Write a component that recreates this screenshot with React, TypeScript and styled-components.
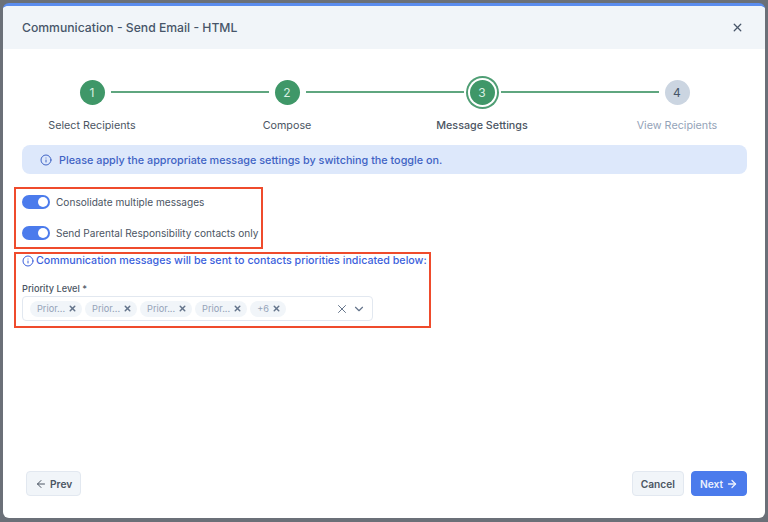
import React from "react";
import styled, { createGlobalStyle } from "styled-components";
import { ArrowLeft, ArrowRight, ChevronDown, Info, X } from "lucide-react";

const GlobalStyle = createGlobalStyle`
  html, body {
    margin: 0;
    padding: 0;
    height: 522px;
    overflow: hidden;
    background: #6b7078;
    font-family: Inter, "Liberation Sans", sans-serif;
  }
  * { box-sizing: border-box; }
`;

const steps = [
  { n: 1, label: "Select Recipients", state: "done" },
  { n: 2, label: "Compose", state: "done" },
  { n: 3, label: "Message Settings", state: "active" },
  { n: 4, label: "View Recipients", state: "todo" },
];

const chips = ["Prior...", "Prior...", "Prior...", "Prior...", "+6"];

const App = () => {
  return (
    <>
      <GlobalStyle />
      <Backdrop>
        <Modal>
          <Header>
            <Title>Communication - Send Email - HTML</Title>
            <CloseButton>
              <X size={13} strokeWidth={2.4} />
            </CloseButton>
          </Header>

          <Body>
            <Track>
              {steps.map((s, i) => (
                <React.Fragment key={s.n}>
                  {i > 0 && <Connector />}
                  <Circle $state={s.state}>{s.n}</Circle>
                </React.Fragment>
              ))}
            </Track>
            <Labels>
              {steps.map((s) => (
                <StepLabel key={s.n} $state={s.state}>
                  {s.label}
                </StepLabel>
              ))}
            </Labels>

            <Alert>
              <Info size={12} strokeWidth={2} />
              <span>Please apply the appropriate message settings by switching the toggle on.</span>
            </Alert>

            <ToggleBox>
              <ToggleRow>
                <Toggle />
                <span>Consolidate multiple messages</span>
              </ToggleRow>
              <ToggleRow>
                <Toggle />
                <span>Send Parental Responsibility contacts only</span>
              </ToggleRow>
            </ToggleBox>

            <PriorityBox>
              <Notice>
                <Info size={12} strokeWidth={2} />
                <span>Communication messages will be sent to contacts priorities indicated below:</span>
              </Notice>
              <FieldLabel>Priority Level *</FieldLabel>
              <Select>
                <Chips>
                  {chips.map((c, i) => (
                    <Chip key={i}>
                      <span>{c}</span>
                      <X size={9} strokeWidth={4} />
                    </Chip>
                  ))}
                </Chips>
                <SelectIcons>
                  <X size={14} strokeWidth={1.7} />
                  <ChevronDown size={14} strokeWidth={2} />
                </SelectIcons>
              </Select>
            </PriorityBox>
          </Body>

          <Footer>
            <Button>
              <ArrowLeft size={12} strokeWidth={2} />
              Prev
            </Button>
            <FooterRight>
              <Button>Cancel</Button>
              <Button $primary>
                Next
                <ArrowRight size={12} strokeWidth={2.6} />
              </Button>
            </FooterRight>
          </Footer>
        </Modal>
      </Backdrop>
    </>
  );
};

const Backdrop = styled.div`
  height: 522px;
  padding: 3px 3px 4px;
`;

const Modal = styled.div`
  display: flex;
  flex-direction: column;
  height: 100%;
  background: #ffffff;
  border-top: 3px solid #5b8def;
  border-radius: 6px;
  overflow: hidden;
`;

const Header = styled.div`
  display: flex;
  align-items: center;
  justify-content: space-between;
  height: 43px;
  flex: none;
  padding: 0 21px 0 19px;
  background: #f1f5f9;
`;

const Title = styled.div`
  font-size: 12.2px;
  font-weight: 500;
  color: #475569;
`;

const CloseButton = styled.div`
  display: flex;
  color: #475569;
`;

const Body = styled.div`
  flex: 1;
  padding: 26px 18px 0 19px;
`;

const Track = styled.div`
  display: flex;
  align-items: center;
  height: 34px;
  padding: 0 57.5px;
`;

const Connector = styled.div`
  flex: 1;
  height: 2px;
  margin: 0 6px;
  background: #5fa67f;
`;

const Circle = styled.div<{ $state: string }>`
  display: flex;
  align-items: center;
  justify-content: center;
  flex: none;
  width: 25px;
  height: 25px;
  border-radius: 50%;
  font-size: 12px;
  background: ${(p) => (p.$state === "todo" ? "#cbd5e1" : "#3f9768")};
  color: ${(p) => (p.$state === "todo" ? "#475569" : "#d9efe3")};
  box-shadow: ${(p) =>
    p.$state === "active" ? "0 0 0 2px #fff, 0 0 0 4px #4f9e74" : "none"};
`;

const Labels = styled.div`
  display: flex;
  justify-content: space-between;
  margin-top: 9px;
`;

const StepLabel = styled.div<{ $state: string }>`
  width: 140px;
  text-align: center;
  font-size: 10.75px;
  line-height: 16px;
  font-weight: ${(p) => (p.$state === "active" ? 500 : 400)};
  color: ${(p) => (p.$state === "todo" ? "#94a3b8" : "#4b5563")};
`;

const Alert = styled.div`
  display: flex;
  align-items: center;
  gap: 7px;
  height: 29px;
  margin-top: 11px;
  padding: 1px 18px 0;
  border-radius: 8px;
  background: #dde8fb;
  color: #3f63c4;
  font-size: 10.8px;
  font-weight: 500;

  svg {
    flex: none;
  }
`;

const ToggleBox = styled.div`
  display: flex;
  flex-direction: column;
  gap: 17px;
  width: 249px;
  height: 62px;
  margin: 13px 0 0 -8px;
  padding: 6px 0 0 6px;
  border: 2px solid #ef4b2c;
`;

const ToggleRow = styled.div`
  display: flex;
  align-items: center;
  gap: 6px;
  height: 14px;
  font-size: 10.1px;
  color: #4b5563;
  white-space: nowrap;
`;

const Toggle = styled.div`
  position: relative;
  flex: none;
  width: 28px;
  height: 14px;
  border-radius: 7px;
  background: #4b7bec;

  &::after {
    content: "";
    position: absolute;
    top: 2px;
    right: 2px;
    width: 10px;
    height: 10px;
    border-radius: 50%;
    background: #fff;
  }
`;

const PriorityBox = styled.div`
  width: 417px;
  height: 76px;
  margin: 3px 0 0 -8px;
  padding: 0 0 0 6px;
  border: 2px solid #ef4b2c;
`;

const Notice = styled.div`
  display: flex;
  align-items: center;
  gap: 2px;
  height: 13px;
  color: #3b5fdc;
  font-size: 10.7px;
  font-weight: 500;
  white-space: nowrap;

  svg {
    flex: none;
  }
`;

const FieldLabel = styled.div`
  margin-top: 16px;
  font-size: 9.2px;
  line-height: 12px;
  font-weight: 500;
  color: #4b5563;
`;

const Select = styled.div`
  display: flex;
  align-items: center;
  justify-content: space-between;
  width: 351px;
  height: 25px;
  margin-top: 1px;
  padding: 0 6px 0 7px;
  border: 1px solid #e2e8f0;
  border-radius: 4px;
`;

const Chips = styled.div`
  display: flex;
  gap: 3px;
`;

const Chip = styled.div`
  display: flex;
  align-items: center;
  gap: 3px;
  height: 16px;
  padding: 0 5px 0 7px;
  border-radius: 8px;
  background: #f1f5f9;
  color: #94a3b8;
  font-size: 9.2px;
  white-space: nowrap;

  svg {
    color: #64748b;
  }
`;

const SelectIcons = styled.div`
  display: flex;
  align-items: center;
  gap: 3px;
  color: #64748b;
`;

const Footer = styled.div`
  display: flex;
  align-items: center;
  justify-content: space-between;
  flex: none;
  padding: 0 18px 22px 23px;
`;

const FooterRight = styled.div`
  display: flex;
  gap: 7px;
`;

const Button = styled.div<{ $primary?: boolean }>`
  display: flex;
  align-items: center;
  gap: 3px;
  height: 25px;
  padding: 0 8px;
  border-radius: 4px;
  border: 1px solid ${(p) => (p.$primary ? "#4b7bec" : "#e2e8f0")};
  background: ${(p) => (p.$primary ? "#4b7bec" : "#f1f5f9")};
  color: ${(p) => (p.$primary ? "#eaf0fd" : "#4b5563")};
  font-size: 10.2px;
  font-weight: 600;
`;

export default App;
